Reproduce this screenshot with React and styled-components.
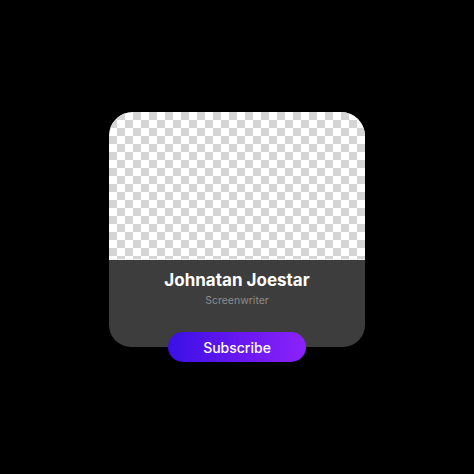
import React from "react";
import styled, { createGlobalStyle } from "styled-components";

const Global = createGlobalStyle`
  html, body { margin: 0; padding: 0; background: #000; }
  body { font-family: Inter, "Noto Sans", sans-serif; }
`;

const Page = styled.div`
  width: 474px;
  height: 474px;
  background: #000;
  display: flex;
  flex-direction: column;
  align-items: center;
  padding-top: 112px;
  box-sizing: border-box;
`;

const Card = styled.div`
  width: 256px;
  height: 235px;
  border-radius: 24px 24px 22px 22px;
  overflow: hidden;
  display: flex;
  flex-direction: column;
  background: #3d3d3d;
`;

const Checker = styled.div`
  height: 147px;
  background-color: #ffffff;
  background-image:
    linear-gradient(45deg, #d5d5d5 25%, transparent 25%, transparent 75%, #d5d5d5 75%),
    linear-gradient(45deg, #d5d5d5 25%, transparent 25%, transparent 75%, #d5d5d5 75%);
  background-size: 16px 16px;
  background-position: 0 0, 8px 8px;
  border-bottom: 1px solid #f2f2f2;
`;

const Info = styled.div`
  flex: 1;
  display: flex;
  flex-direction: column;
  align-items: center;
  padding-top: 10px;
  gap: 3px;
`;

const Name = styled.div`
  color: #ffffff;
  font-size: 17px;
  font-weight: 700;
  line-height: 21px;
`;

const Role = styled.div`
  color: #8c8c8c;
  font-size: 10.5px;
  line-height: 14px;
`;

const Button = styled.button`
  margin-top: -15px;
  width: 138px;
  height: 30px;
  border: none;
  border-radius: 15px;
  background: linear-gradient(90deg, #3a10e6 0%, #6a18f0 55%, #8c22fb 100%);
  color: #ffffff;
  font-family: Inter, "Noto Sans", sans-serif;
  font-size: 14px;
  font-weight: 500;
  padding: 0;
  cursor: pointer;
`;

export default function App() {
  return (
    <>
      <Global />
      <Page>
        <Card>
          <Checker />
          <Info>
            <Name>Johnatan Joestar</Name>
            <Role>Screenwriter</Role>
          </Info>
        </Card>
        <Button>Subscribe</Button>
      </Page>
    </>
  );
}
